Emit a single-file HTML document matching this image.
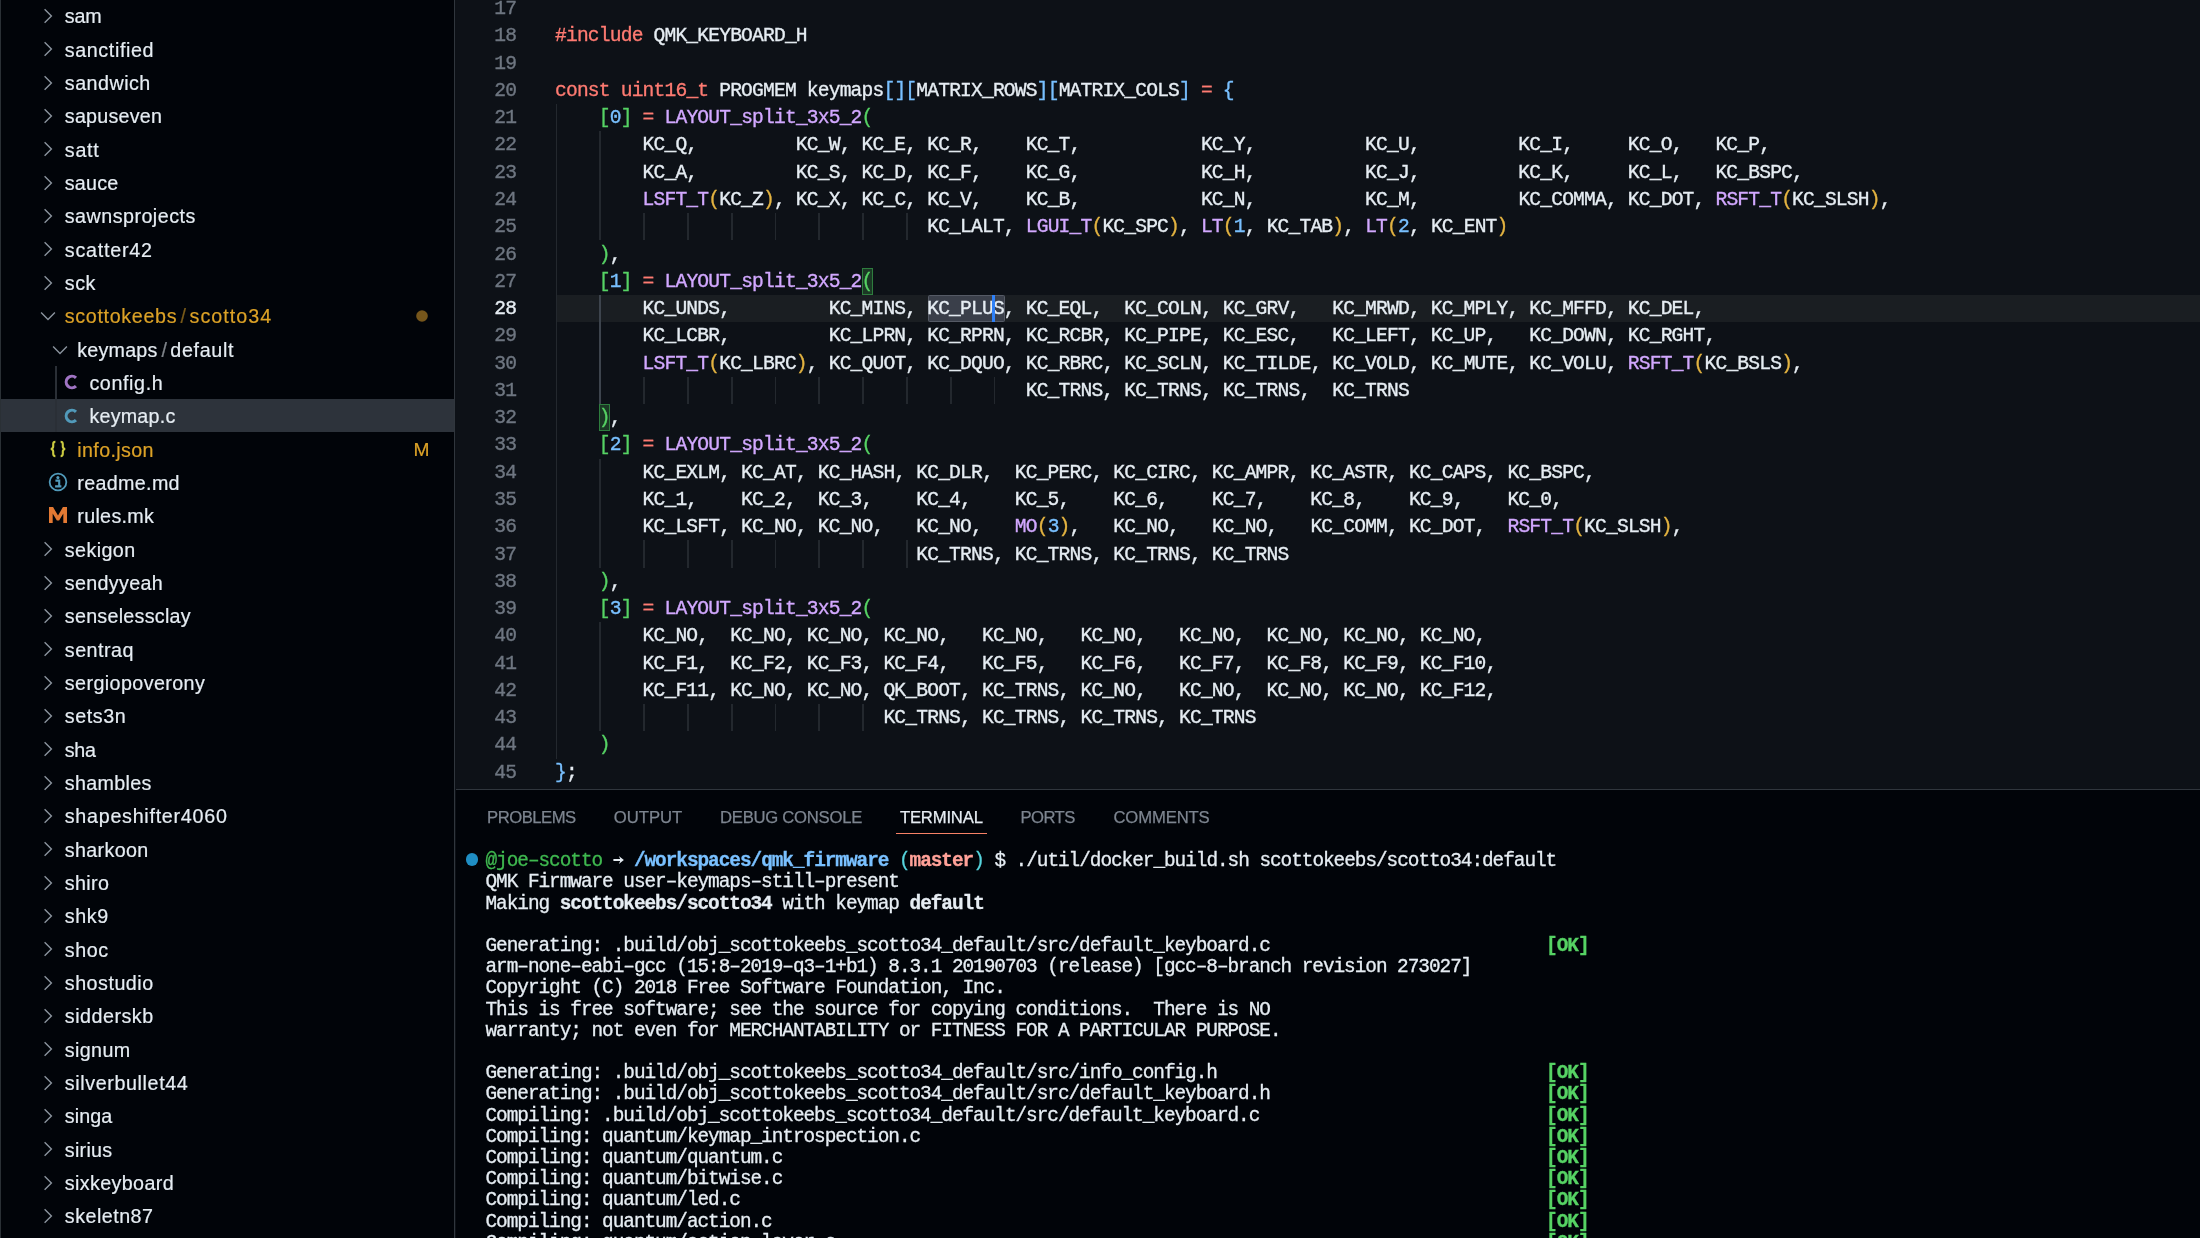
<!DOCTYPE html>
<html lang="en"><head><meta charset="utf-8"><title>keymap.c - qmk_firmware</title>
<style>

html,body{margin:0;padding:0;width:2200px;height:1238px;overflow:hidden;background:#0d1117;}
body{position:relative;font-family:"Liberation Sans",sans-serif;color:#e6edf3;}
#sbbg{position:absolute;left:0;top:0;width:454px;height:1238px;background:#010409;}
#sidebar{position:absolute;left:0;top:0;width:454px;height:1238px;overflow:hidden;will-change:transform;}
#sbborder{position:absolute;left:453.8px;top:0;width:1.7px;height:1238px;background:#30363d;}
#leftedge{position:absolute;left:0;top:0;width:1.2px;height:1238px;background:#2a3035;}
.row{position:absolute;left:0;width:454px;height:33.333px;line-height:33.333px;font-size:19.7px;white-space:pre;color:#e6edf3;-webkit-text-stroke:0.2px;}
.row .lbl{position:absolute;top:1.3px;}
.row.sel{background:#2d333b;height:33.4px;}
.row svg{position:absolute;overflow:visible;}
.yel{color:#dca227;}
.sep{opacity:.55;}
#editor{position:absolute;left:455.5px;top:0;width:1744.5px;height:788.6px;overflow:hidden;will-change:transform;}
.ln{position:absolute;left:0;width:60.1px;text-align:right;font-family:"Liberation Mono",monospace;font-size:19.6px;letter-spacing:-0.811px;-webkit-text-stroke:0.35px;margin-top:1.2px;line-height:27.273px;height:27.273px;color:#6e7681;}
.ln.act{color:#e6edf3;}
.cl{position:absolute;left:99.0px;font-family:"Liberation Mono",monospace;font-size:19.6px;letter-spacing:-0.811px;-webkit-text-stroke:0.35px;margin-top:1.2px;line-height:27.273px;height:27.273px;white-space:pre;color:#e6edf3;}
.k{color:#ff7b72;}.f{color:#d2a8ff;}.n{color:#79c0ff;}.b1{color:#79c0ff;}.b2{color:#56d364;}.b3{color:#e3b341;}
.ig{position:absolute;width:1.8px;background:#23282e;}
.ig.a{background:#3d444d;}
#curline{position:absolute;left:101.3px;right:0;background:#1a1e22;}
#panelbg{position:absolute;left:455.5px;top:788.6px;width:1744.5px;height:450px;background:#010409;border-top:1.5px solid #30363d;}
#panel{position:absolute;left:455.5px;top:788.6px;width:1744.5px;height:450px;border-top:1.5px solid transparent;overflow:hidden;will-change:transform;}
.tab{position:absolute;top:17.4px;-webkit-text-stroke:0.25px;font-size:16.67px;line-height:22px;color:#7d8590;white-space:pre;}
.tab.on{color:#e6edf3;}
#tabline{position:absolute;background:#f78166;height:1.6px;}
.tl{position:absolute;left:29.5px;font-family:"Liberation Mono",monospace;font-size:19.4px;letter-spacing:-1.036px;-webkit-text-stroke:0.3px;margin-top:2.8px;line-height:21.212px;height:21.212px;white-space:pre;color:#e6edf3;}
.tl b{font-weight:bold;}
.g{color:#3fb950;}.bb{color:#79c0ff;font-weight:bold;}.cy{color:#56d4dd;}.rd{color:#ffa198;font-weight:bold;}.ok{color:#56d364;font-weight:bold;}

</style></head><body>
<div id="sbbg"></div><div id="panelbg"></div>
<div id="sidebar">
<div class="row" style="top:-1.00px">
<svg width="10" height="18" style="left:43.25px;top:8.02px" viewBox="0 0 10 18"><path d="M1.6 2.3 L8.4 9 L1.6 15.7" fill="none" stroke="#8b949e" stroke-width="1.4"/></svg>
<span class="lbl" style="left:64.80px;letter-spacing:-0.200px">sam</span>
</div>
<div class="row" style="top:32.33px">
<svg width="10" height="18" style="left:43.25px;top:8.02px" viewBox="0 0 10 18"><path d="M1.6 2.3 L8.4 9 L1.6 15.7" fill="none" stroke="#8b949e" stroke-width="1.4"/></svg>
<span class="lbl" style="left:64.80px;letter-spacing:0.611px">sanctified</span>
</div>
<div class="row" style="top:65.67px">
<svg width="10" height="18" style="left:43.25px;top:8.02px" viewBox="0 0 10 18"><path d="M1.6 2.3 L8.4 9 L1.6 15.7" fill="none" stroke="#8b949e" stroke-width="1.4"/></svg>
<span class="lbl" style="left:64.80px;letter-spacing:0.486px">sandwich</span>
</div>
<div class="row" style="top:99.00px">
<svg width="10" height="18" style="left:43.25px;top:8.02px" viewBox="0 0 10 18"><path d="M1.6 2.3 L8.4 9 L1.6 15.7" fill="none" stroke="#8b949e" stroke-width="1.4"/></svg>
<span class="lbl" style="left:64.80px;letter-spacing:0.238px">sapuseven</span>
</div>
<div class="row" style="top:132.33px">
<svg width="10" height="18" style="left:43.25px;top:8.02px" viewBox="0 0 10 18"><path d="M1.6 2.3 L8.4 9 L1.6 15.7" fill="none" stroke="#8b949e" stroke-width="1.4"/></svg>
<span class="lbl" style="left:64.80px;letter-spacing:0.767px">satt</span>
</div>
<div class="row" style="top:165.67px">
<svg width="10" height="18" style="left:43.25px;top:8.02px" viewBox="0 0 10 18"><path d="M1.6 2.3 L8.4 9 L1.6 15.7" fill="none" stroke="#8b949e" stroke-width="1.4"/></svg>
<span class="lbl" style="left:64.80px;letter-spacing:0.200px">sauce</span>
</div>
<div class="row" style="top:199.00px">
<svg width="10" height="18" style="left:43.25px;top:8.02px" viewBox="0 0 10 18"><path d="M1.6 2.3 L8.4 9 L1.6 15.7" fill="none" stroke="#8b949e" stroke-width="1.4"/></svg>
<span class="lbl" style="left:64.80px;letter-spacing:0.475px">sawnsprojects</span>
</div>
<div class="row" style="top:232.33px">
<svg width="10" height="18" style="left:43.25px;top:8.02px" viewBox="0 0 10 18"><path d="M1.6 2.3 L8.4 9 L1.6 15.7" fill="none" stroke="#8b949e" stroke-width="1.4"/></svg>
<span class="lbl" style="left:64.80px;letter-spacing:0.775px">scatter42</span>
</div>
<div class="row" style="top:265.67px">
<svg width="10" height="18" style="left:43.25px;top:8.02px" viewBox="0 0 10 18"><path d="M1.6 2.3 L8.4 9 L1.6 15.7" fill="none" stroke="#8b949e" stroke-width="1.4"/></svg>
<span class="lbl" style="left:64.80px;letter-spacing:0.500px">sck</span>
</div>
<div class="row" style="top:299.00px">
<svg width="18" height="10" style="left:38.60px;top:12.27px" viewBox="0 0 18 10"><path d="M2.1 1.5 L9 8.4 L15.9 1.5" fill="none" stroke="#8b949e" stroke-width="1.4"/></svg>
<span class="lbl yel" style="left:64.80px;letter-spacing:0.670px">scottokeebs</span>
<span class="lbl yel sep" style="left:180.4px">/</span>
<span class="lbl yel" style="left:189.60px;letter-spacing:1.014px">scotto34</span>
<svg width="12" height="12" style="left:415.9px;top:10.92px" viewBox="0 0 12 12"><circle cx="6" cy="6" r="5.8" fill="#76561b"/></svg>
</div>
<div class="row" style="top:332.33px">
<svg width="18" height="10" style="left:50.60px;top:12.27px" viewBox="0 0 18 10"><path d="M2.1 1.5 L9 8.4 L15.9 1.5" fill="none" stroke="#8b949e" stroke-width="1.4"/></svg>
<span class="lbl" style="left:77.30px;letter-spacing:0.200px">keymaps</span>
<span class="lbl sep" style="left:161.4px">/</span>
<span class="lbl" style="left:170.30px;letter-spacing:0.667px">default</span>
</div>
<div class="row" style="top:365.67px">
<svg width="16" height="18" style="left:63.7px;top:7.72px" viewBox="-8 -9 16 18"><path d="M4.0 -4.2 A5.8 5.8 0 1 0 4.0 4.2" fill="none" stroke="#a074c4" stroke-width="3.1"/></svg>
<span class="lbl" style="left:89.40px;letter-spacing:0.629px">config.h</span>
</div>
<div class="row sel" style="top:399.00px">
<svg width="16" height="18" style="left:63.7px;top:7.72px" viewBox="-8 -9 16 18"><path d="M4.0 -4.2 A5.8 5.8 0 1 0 4.0 4.2" fill="none" stroke="#519aba" stroke-width="3.1"/></svg>
<span class="lbl" style="left:89.40px;letter-spacing:0.229px">keymap.c</span>
</div>
<div class="row" style="top:432.33px">
<svg width="18" height="18" style="left:49px;top:7.77px" viewBox="0 0 18 18"><path d="M6.4 1.8 C4.4 1.8 4.2 2.6 4.2 4.2 V6.6 C4.2 8 3.4 8.7 1.9 9 C3.4 9.3 4.2 10 4.2 11.4 V13.8 C4.2 15.4 4.4 16.2 6.4 16.2 M11.6 1.8 C13.6 1.8 13.8 2.6 13.8 4.2 V6.6 C13.8 8 14.6 8.7 16.1 9 C14.6 9.3 13.8 10 13.8 11.4 V13.8 C13.8 15.4 13.6 16.2 11.6 16.2" fill="none" stroke="#cbcb41" stroke-width="2.1"/></svg>
<span class="lbl yel" style="left:77.30px;letter-spacing:0.350px">info.json</span>
<span class="lbl yel" style="left:413.4px;font-size:19.2px;top:0.2px">M</span>
</div>
<div class="row" style="top:465.67px">
<svg width="20" height="20" style="left:48px;top:6.57px" viewBox="0 0 20 20"><circle cx="10" cy="10" r="8.35" fill="none" stroke="#519aba" stroke-width="1.8"/><path d="M7.4 8.6 H11.2 V14 M7.1 14.4 H13.4" fill="none" stroke="#519aba" stroke-width="2.1"/><circle cx="9.9" cy="5.6" r="1.55" fill="#519aba"/></svg>
<span class="lbl" style="left:77.30px;letter-spacing:0.338px">readme.md</span>
</div>
<div class="row" style="top:499.00px">
<svg width="18" height="16" style="left:49.2px;top:7.92px" viewBox="0 0 17.6 15.5"><path d="M0 15.5 V0 H4 L8.8 8.3 L13.6 0 H17.6 V15.5 H14 V6.2 L9.9 13.2 H7.7 L3.6 6.2 V15.5 Z" fill="#e37933"/></svg>
<span class="lbl" style="left:77.30px;letter-spacing:0.314px">rules.mk</span>
</div>
<div class="row" style="top:532.33px">
<svg width="10" height="18" style="left:43.25px;top:8.02px" viewBox="0 0 10 18"><path d="M1.6 2.3 L8.4 9 L1.6 15.7" fill="none" stroke="#8b949e" stroke-width="1.4"/></svg>
<span class="lbl" style="left:64.80px;letter-spacing:0.417px">sekigon</span>
</div>
<div class="row" style="top:565.67px">
<svg width="10" height="18" style="left:43.25px;top:8.02px" viewBox="0 0 10 18"><path d="M1.6 2.3 L8.4 9 L1.6 15.7" fill="none" stroke="#8b949e" stroke-width="1.4"/></svg>
<span class="lbl" style="left:64.80px;letter-spacing:0.338px">sendyyeah</span>
</div>
<div class="row" style="top:599.00px">
<svg width="10" height="18" style="left:43.25px;top:8.02px" viewBox="0 0 10 18"><path d="M1.6 2.3 L8.4 9 L1.6 15.7" fill="none" stroke="#8b949e" stroke-width="1.4"/></svg>
<span class="lbl" style="left:64.80px;letter-spacing:0.275px">senselessclay</span>
</div>
<div class="row" style="top:632.33px">
<svg width="10" height="18" style="left:43.25px;top:8.02px" viewBox="0 0 10 18"><path d="M1.6 2.3 L8.4 9 L1.6 15.7" fill="none" stroke="#8b949e" stroke-width="1.4"/></svg>
<span class="lbl" style="left:64.80px;letter-spacing:0.500px">sentraq</span>
</div>
<div class="row" style="top:665.67px">
<svg width="10" height="18" style="left:43.25px;top:8.02px" viewBox="0 0 10 18"><path d="M1.6 2.3 L8.4 9 L1.6 15.7" fill="none" stroke="#8b949e" stroke-width="1.4"/></svg>
<span class="lbl" style="left:64.80px;letter-spacing:0.415px">sergiopoverony</span>
</div>
<div class="row" style="top:699.00px">
<svg width="10" height="18" style="left:43.25px;top:8.02px" viewBox="0 0 10 18"><path d="M1.6 2.3 L8.4 9 L1.6 15.7" fill="none" stroke="#8b949e" stroke-width="1.4"/></svg>
<span class="lbl" style="left:64.80px;letter-spacing:0.580px">sets3n</span>
</div>
<div class="row" style="top:732.33px">
<svg width="10" height="18" style="left:43.25px;top:8.02px" viewBox="0 0 10 18"><path d="M1.6 2.3 L8.4 9 L1.6 15.7" fill="none" stroke="#8b949e" stroke-width="1.4"/></svg>
<span class="lbl" style="left:64.80px;letter-spacing:-0.350px">sha</span>
</div>
<div class="row" style="top:765.67px">
<svg width="10" height="18" style="left:43.25px;top:8.02px" viewBox="0 0 10 18"><path d="M1.6 2.3 L8.4 9 L1.6 15.7" fill="none" stroke="#8b949e" stroke-width="1.4"/></svg>
<span class="lbl" style="left:64.80px;letter-spacing:0.343px">shambles</span>
</div>
<div class="row" style="top:799.00px">
<svg width="10" height="18" style="left:43.25px;top:8.02px" viewBox="0 0 10 18"><path d="M1.6 2.3 L8.4 9 L1.6 15.7" fill="none" stroke="#8b949e" stroke-width="1.4"/></svg>
<span class="lbl" style="left:64.80px;letter-spacing:0.733px">shapeshifter4060</span>
</div>
<div class="row" style="top:832.33px">
<svg width="10" height="18" style="left:43.25px;top:8.02px" viewBox="0 0 10 18"><path d="M1.6 2.3 L8.4 9 L1.6 15.7" fill="none" stroke="#8b949e" stroke-width="1.4"/></svg>
<span class="lbl" style="left:64.80px;letter-spacing:0.357px">sharkoon</span>
</div>
<div class="row" style="top:865.67px">
<svg width="10" height="18" style="left:43.25px;top:8.02px" viewBox="0 0 10 18"><path d="M1.6 2.3 L8.4 9 L1.6 15.7" fill="none" stroke="#8b949e" stroke-width="1.4"/></svg>
<span class="lbl" style="left:64.80px;letter-spacing:0.350px">shiro</span>
</div>
<div class="row" style="top:899.00px">
<svg width="10" height="18" style="left:43.25px;top:8.02px" viewBox="0 0 10 18"><path d="M1.6 2.3 L8.4 9 L1.6 15.7" fill="none" stroke="#8b949e" stroke-width="1.4"/></svg>
<span class="lbl" style="left:64.80px;letter-spacing:0.567px">shk9</span>
</div>
<div class="row" style="top:932.33px">
<svg width="10" height="18" style="left:43.25px;top:8.02px" viewBox="0 0 10 18"><path d="M1.6 2.3 L8.4 9 L1.6 15.7" fill="none" stroke="#8b949e" stroke-width="1.4"/></svg>
<span class="lbl" style="left:64.80px;letter-spacing:0.567px">shoc</span>
</div>
<div class="row" style="top:965.67px">
<svg width="10" height="18" style="left:43.25px;top:8.02px" viewBox="0 0 10 18"><path d="M1.6 2.3 L8.4 9 L1.6 15.7" fill="none" stroke="#8b949e" stroke-width="1.4"/></svg>
<span class="lbl" style="left:64.80px;letter-spacing:0.512px">shostudio</span>
</div>
<div class="row" style="top:999.00px">
<svg width="10" height="18" style="left:43.25px;top:8.02px" viewBox="0 0 10 18"><path d="M1.6 2.3 L8.4 9 L1.6 15.7" fill="none" stroke="#8b949e" stroke-width="1.4"/></svg>
<span class="lbl" style="left:64.80px;letter-spacing:0.512px">sidderskb</span>
</div>
<div class="row" style="top:1032.33px">
<svg width="10" height="18" style="left:43.25px;top:8.02px" viewBox="0 0 10 18"><path d="M1.6 2.3 L8.4 9 L1.6 15.7" fill="none" stroke="#8b949e" stroke-width="1.4"/></svg>
<span class="lbl" style="left:64.80px;letter-spacing:0.380px">signum</span>
</div>
<div class="row" style="top:1065.67px">
<svg width="10" height="18" style="left:43.25px;top:8.02px" viewBox="0 0 10 18"><path d="M1.6 2.3 L8.4 9 L1.6 15.7" fill="none" stroke="#8b949e" stroke-width="1.4"/></svg>
<span class="lbl" style="left:64.80px;letter-spacing:0.623px">silverbullet44</span>
</div>
<div class="row" style="top:1099.00px">
<svg width="10" height="18" style="left:43.25px;top:8.02px" viewBox="0 0 10 18"><path d="M1.6 2.3 L8.4 9 L1.6 15.7" fill="none" stroke="#8b949e" stroke-width="1.4"/></svg>
<span class="lbl" style="left:64.80px;letter-spacing:0.075px">singa</span>
</div>
<div class="row" style="top:1132.33px">
<svg width="10" height="18" style="left:43.25px;top:8.02px" viewBox="0 0 10 18"><path d="M1.6 2.3 L8.4 9 L1.6 15.7" fill="none" stroke="#8b949e" stroke-width="1.4"/></svg>
<span class="lbl" style="left:64.80px;letter-spacing:0.280px">sirius</span>
</div>
<div class="row" style="top:1165.67px">
<svg width="10" height="18" style="left:43.25px;top:8.02px" viewBox="0 0 10 18"><path d="M1.6 2.3 L8.4 9 L1.6 15.7" fill="none" stroke="#8b949e" stroke-width="1.4"/></svg>
<span class="lbl" style="left:64.80px;letter-spacing:0.380px">sixkeyboard</span>
</div>
<div class="row" style="top:1199.00px">
<svg width="10" height="18" style="left:43.25px;top:8.02px" viewBox="0 0 10 18"><path d="M1.6 2.3 L8.4 9 L1.6 15.7" fill="none" stroke="#8b949e" stroke-width="1.4"/></svg>
<span class="lbl" style="left:64.80px;letter-spacing:0.488px">skeletn87</span>
</div>
<div style="position:absolute;left:55.2px;top:366px;width:1.6px;height:66px;background:#2a2f36"></div>
</div>
<div id="leftedge"></div><div id="sbborder"></div>
<div id="editor">
<div id="curline" style="top:294.90px;height:26.97px"></div>
<div class="ig" style="left:99.6px;top:103.99px;height:654.55px"></div>
<div class="ig" style="left:143.4px;top:131.26px;height:109.09px"></div>
<div class="ig a" style="left:143.4px;top:294.90px;height:109.09px"></div>
<div class="ig" style="left:143.4px;top:458.54px;height:109.09px"></div>
<div class="ig" style="left:143.4px;top:622.17px;height:109.09px"></div>
<div class="ig" style="left:187.2px;top:213.08px;height:27.27px"></div>
<div class="ig" style="left:231.0px;top:213.08px;height:27.27px"></div>
<div class="ig" style="left:274.8px;top:213.08px;height:27.27px"></div>
<div class="ig" style="left:318.6px;top:213.08px;height:27.27px"></div>
<div class="ig" style="left:362.4px;top:213.08px;height:27.27px"></div>
<div class="ig" style="left:406.2px;top:213.08px;height:27.27px"></div>
<div class="ig" style="left:450.0px;top:213.08px;height:27.27px"></div>
<div class="ig" style="left:187.2px;top:376.72px;height:27.27px"></div>
<div class="ig" style="left:231.0px;top:376.72px;height:27.27px"></div>
<div class="ig" style="left:274.8px;top:376.72px;height:27.27px"></div>
<div class="ig" style="left:318.6px;top:376.72px;height:27.27px"></div>
<div class="ig" style="left:362.4px;top:376.72px;height:27.27px"></div>
<div class="ig" style="left:406.2px;top:376.72px;height:27.27px"></div>
<div class="ig" style="left:450.0px;top:376.72px;height:27.27px"></div>
<div class="ig" style="left:493.8px;top:376.72px;height:27.27px"></div>
<div class="ig" style="left:537.6px;top:376.72px;height:27.27px"></div>
<div class="ig" style="left:187.2px;top:540.35px;height:27.27px"></div>
<div class="ig" style="left:231.0px;top:540.35px;height:27.27px"></div>
<div class="ig" style="left:274.8px;top:540.35px;height:27.27px"></div>
<div class="ig" style="left:318.6px;top:540.35px;height:27.27px"></div>
<div class="ig" style="left:362.4px;top:540.35px;height:27.27px"></div>
<div class="ig" style="left:406.2px;top:540.35px;height:27.27px"></div>
<div class="ig" style="left:450.0px;top:540.35px;height:27.27px"></div>
<div class="ig" style="left:187.2px;top:703.99px;height:27.27px"></div>
<div class="ig" style="left:231.0px;top:703.99px;height:27.27px"></div>
<div class="ig" style="left:274.8px;top:703.99px;height:27.27px"></div>
<div class="ig" style="left:318.6px;top:703.99px;height:27.27px"></div>
<div class="ig" style="left:362.4px;top:703.99px;height:27.27px"></div>
<div class="ig" style="left:406.2px;top:703.99px;height:27.27px"></div>
<div style="position:absolute;left:471.7px;top:295.00px;width:77.1px;height:27.17px;background:#3a3f4a;border:1px solid #555a65;box-sizing:border-box;border-radius:1.5px"></div>
<div style="position:absolute;left:405.8px;top:267.53px;width:10.9px;height:27.37px;background:#1b3825;border:1.3px solid #2e7d3e;box-sizing:border-box"></div>
<div style="position:absolute;left:143.0px;top:403.89px;width:10.9px;height:27.37px;background:#1b3825;border:1.3px solid #2e7d3e;box-sizing:border-box"></div>
<div class="ln" style="top:-5.10px">17</div>
<div class="ln" style="top:22.17px">18</div>
<div class="cl" style="top:22.17px"><span class="k">#include</span> QMK_KEYBOARD_H</div>
<div class="ln" style="top:49.45px">19</div>
<div class="ln" style="top:76.72px">20</div>
<div class="cl" style="top:76.72px"><span class="k">const</span> <span class="k">uint16_t</span> PROGMEM keymaps<span class="b1">[</span><span class="b1">]</span><span class="b1">[</span>MATRIX_ROWS<span class="b1">]</span><span class="b1">[</span>MATRIX_COLS<span class="b1">]</span> <span class="k">=</span> <span class="b1">{</span></div>
<div class="ln" style="top:103.99px">21</div>
<div class="cl" style="top:103.99px">    <span class="b2">[</span><span class="n">0</span><span class="b2">]</span> <span class="k">=</span> <span class="f">LAYOUT_split_3x5_2</span><span class="b2">(</span></div>
<div class="ln" style="top:131.26px">22</div>
<div class="cl" style="top:131.26px">        KC_Q,         KC_W, KC_E, KC_R,    KC_T,           KC_Y,          KC_U,         KC_I,     KC_O,   KC_P,</div>
<div class="ln" style="top:158.54px">23</div>
<div class="cl" style="top:158.54px">        KC_A,         KC_S, KC_D, KC_F,    KC_G,           KC_H,          KC_J,         KC_K,     KC_L,   KC_BSPC,</div>
<div class="ln" style="top:185.81px">24</div>
<div class="cl" style="top:185.81px">        <span class="f">LSFT_T</span><span class="b3">(</span>KC_Z<span class="b3">)</span>, KC_X, KC_C, KC_V,    KC_B,           KC_N,          KC_M,         KC_COMMA, KC_DOT, <span class="f">RSFT_T</span><span class="b3">(</span>KC_SLSH<span class="b3">)</span>,</div>
<div class="ln" style="top:213.08px">25</div>
<div class="cl" style="top:213.08px">                                  KC_LALT, <span class="f">LGUI_T</span><span class="b3">(</span>KC_SPC<span class="b3">)</span>, <span class="f">LT</span><span class="b3">(</span><span class="n">1</span>, KC_TAB<span class="b3">)</span>, <span class="f">LT</span><span class="b3">(</span><span class="n">2</span>, KC_ENT<span class="b3">)</span></div>
<div class="ln" style="top:240.35px">26</div>
<div class="cl" style="top:240.35px">    <span class="b2">)</span>,</div>
<div class="ln" style="top:267.63px">27</div>
<div class="cl" style="top:267.63px">    <span class="b2">[</span><span class="n">1</span><span class="b2">]</span> <span class="k">=</span> <span class="f">LAYOUT_split_3x5_2</span><span class="b2">(</span></div>
<div class="ln act" style="top:294.90px">28</div>
<div class="cl" style="top:294.90px">        KC_UNDS,         KC_MINS, KC_PLUS, KC_EQL,  KC_COLN, KC_GRV,   KC_MRWD, KC_MPLY, KC_MFFD, KC_DEL,</div>
<div class="ln" style="top:322.17px">29</div>
<div class="cl" style="top:322.17px">        KC_LCBR,         KC_LPRN, KC_RPRN, KC_RCBR, KC_PIPE, KC_ESC,   KC_LEFT, KC_UP,   KC_DOWN, KC_RGHT,</div>
<div class="ln" style="top:349.45px">30</div>
<div class="cl" style="top:349.45px">        <span class="f">LSFT_T</span><span class="b3">(</span>KC_LBRC<span class="b3">)</span>, KC_QUOT, KC_DQUO, KC_RBRC, KC_SCLN, KC_TILDE, KC_VOLD, KC_MUTE, KC_VOLU, <span class="f">RSFT_T</span><span class="b3">(</span>KC_BSLS<span class="b3">)</span>,</div>
<div class="ln" style="top:376.72px">31</div>
<div class="cl" style="top:376.72px">                                           KC_TRNS, KC_TRNS, KC_TRNS,  KC_TRNS</div>
<div class="ln" style="top:403.99px">32</div>
<div class="cl" style="top:403.99px">    <span class="b2">)</span>,</div>
<div class="ln" style="top:431.26px">33</div>
<div class="cl" style="top:431.26px">    <span class="b2">[</span><span class="n">2</span><span class="b2">]</span> <span class="k">=</span> <span class="f">LAYOUT_split_3x5_2</span><span class="b2">(</span></div>
<div class="ln" style="top:458.54px">34</div>
<div class="cl" style="top:458.54px">        KC_EXLM, KC_AT, KC_HASH, KC_DLR,  KC_PERC, KC_CIRC, KC_AMPR, KC_ASTR, KC_CAPS, KC_BSPC,</div>
<div class="ln" style="top:485.81px">35</div>
<div class="cl" style="top:485.81px">        KC_1,    KC_2,  KC_3,    KC_4,    KC_5,    KC_6,    KC_7,    KC_8,    KC_9,    KC_0,</div>
<div class="ln" style="top:513.08px">36</div>
<div class="cl" style="top:513.08px">        KC_LSFT, KC_NO, KC_NO,   KC_NO,   <span class="f">MO</span><span class="b3">(</span><span class="n">3</span><span class="b3">)</span>,   KC_NO,   KC_NO,   KC_COMM, KC_DOT,  <span class="f">RSFT_T</span><span class="b3">(</span>KC_SLSH<span class="b3">)</span>,</div>
<div class="ln" style="top:540.35px">37</div>
<div class="cl" style="top:540.35px">                                 KC_TRNS, KC_TRNS, KC_TRNS, KC_TRNS</div>
<div class="ln" style="top:567.63px">38</div>
<div class="cl" style="top:567.63px">    <span class="b2">)</span>,</div>
<div class="ln" style="top:594.90px">39</div>
<div class="cl" style="top:594.90px">    <span class="b2">[</span><span class="n">3</span><span class="b2">]</span> <span class="k">=</span> <span class="f">LAYOUT_split_3x5_2</span><span class="b2">(</span></div>
<div class="ln" style="top:622.17px">40</div>
<div class="cl" style="top:622.17px">        KC_NO,  KC_NO, KC_NO, KC_NO,   KC_NO,   KC_NO,   KC_NO,  KC_NO, KC_NO, KC_NO,</div>
<div class="ln" style="top:649.45px">41</div>
<div class="cl" style="top:649.45px">        KC_F1,  KC_F2, KC_F3, KC_F4,   KC_F5,   KC_F6,   KC_F7,  KC_F8, KC_F9, KC_F10,</div>
<div class="ln" style="top:676.72px">42</div>
<div class="cl" style="top:676.72px">        KC_F11, KC_NO, KC_NO, QK_BOOT, KC_TRNS, KC_NO,   KC_NO,  KC_NO, KC_NO, KC_F12,</div>
<div class="ln" style="top:703.99px">43</div>
<div class="cl" style="top:703.99px">                              KC_TRNS, KC_TRNS, KC_TRNS, KC_TRNS</div>
<div class="ln" style="top:731.26px">44</div>
<div class="cl" style="top:731.26px">    <span class="b2">)</span></div>
<div class="ln" style="top:758.54px">45</div>
<div class="cl" style="top:758.54px"><span class="b1">}</span>;</div>
<div style="position:absolute;left:535.8px;top:295.20px;width:3px;height:26.67px;background:#2f81f7"></div>
</div>
<div id="panel">
<div class="tab" style="left:31.00px;letter-spacing:-0.480px">PROBLEMS</div>
<div class="tab" style="left:157.80px;letter-spacing:-0.008px">OUTPUT</div>
<div class="tab" style="left:264.00px;letter-spacing:-0.255px">DEBUG CONSOLE</div>
<div class="tab on" style="left:443.90px;letter-spacing:-0.169px">TERMINAL</div>
<div class="tab" style="left:564.60px;letter-spacing:-0.605px">PORTS</div>
<div class="tab" style="left:657.40px;letter-spacing:-0.118px">COMMENTS</div>
<div id="tabline" style="left:439.5px;top:42.5px;width:91.3px"></div>
<div class="tl" style="top:58.30px"><span class="g">@joe–scotto</span>   <span class="bb">/workspaces/qmk_firmware</span> <span class="cy">(</span><span class="rd">master</span><span class="cy">)</span> $ ./util/docker_build.sh scottokeebs/scotto34:default</div>
<div class="tl" style="top:79.51px">QMK Firmware user–keymaps–still–present</div>
<div class="tl" style="top:100.72px">Making <b>scottokeebs/scotto34</b> with keymap <b>default</b></div>
<div class="tl" style="top:143.15px">Generating: .build/obj_scottokeebs_scotto34_default/src/default_keyboard.c</div>
<div class="tl ok" style="top:143.15px;left:1090.1px">[OK]</div>
<div class="tl" style="top:164.36px">arm–none–eabi–gcc (15:8–2019–q3–1+b1) 8.3.1 20190703 (release) [gcc–8–branch revision 273027]</div>
<div class="tl" style="top:185.57px">Copyright (C) 2018 Free Software Foundation, Inc.</div>
<div class="tl" style="top:206.78px">This is free software; see the source for copying conditions.  There is NO</div>
<div class="tl" style="top:228.00px">warranty; not even for MERCHANTABILITY or FITNESS FOR A PARTICULAR PURPOSE.</div>
<div class="tl" style="top:270.42px">Generating: .build/obj_scottokeebs_scotto34_default/src/info_config.h</div>
<div class="tl ok" style="top:270.42px;left:1090.1px">[OK]</div>
<div class="tl" style="top:291.63px">Generating: .build/obj_scottokeebs_scotto34_default/src/default_keyboard.h</div>
<div class="tl ok" style="top:291.63px;left:1090.1px">[OK]</div>
<div class="tl" style="top:312.84px">Compiling: .build/obj_scottokeebs_scotto34_default/src/default_keyboard.c</div>
<div class="tl ok" style="top:312.84px;left:1090.1px">[OK]</div>
<div class="tl" style="top:334.06px">Compiling: quantum/keymap_introspection.c</div>
<div class="tl ok" style="top:334.06px;left:1090.1px">[OK]</div>
<div class="tl" style="top:355.27px">Compiling: quantum/quantum.c</div>
<div class="tl ok" style="top:355.27px;left:1090.1px">[OK]</div>
<div class="tl" style="top:376.48px">Compiling: quantum/bitwise.c</div>
<div class="tl ok" style="top:376.48px;left:1090.1px">[OK]</div>
<div class="tl" style="top:397.69px">Compiling: quantum/led.c</div>
<div class="tl ok" style="top:397.69px;left:1090.1px">[OK]</div>
<div class="tl" style="top:418.90px">Compiling: quantum/action.c</div>
<div class="tl ok" style="top:418.90px;left:1090.1px">[OK]</div>
<div class="tl" style="top:440.12px">Compiling: quantum/action_layer.c</div>
<div class="tl ok" style="top:440.12px;left:1090.1px">[OK]</div>
<svg width="11" height="8" viewBox="0 0 10.2 7.6" style="position:absolute;left:157.00px;top:66.10px;overflow:visible"><path d="M5.4 0 L10.2 3.8 L5.4 7.6 L6.7 4.75 H0.95 a0.95 0.95 0 0 1 0 -1.9 H6.7 Z" fill="#e6edf3"/></svg>
<div style="position:absolute;left:9.8px;top:63.4px;width:12.3px;height:12.3px;border-radius:50%;background:#1f8ec4"></div>
</div>
</body></html>
